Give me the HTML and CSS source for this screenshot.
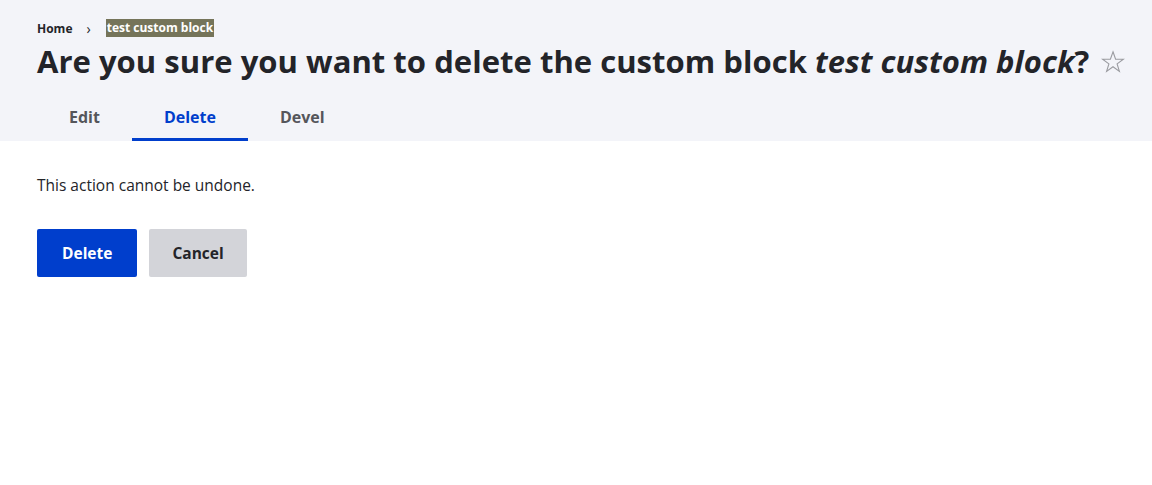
FILE: index.html
```html
<!DOCTYPE html>
<html lang="en">
<head>
<meta charset="utf-8">
<title>Delete custom block</title>
<link rel="stylesheet" href="styles.css">
</head>
<body>
<header class="page-header">
  <nav class="breadcrumb">
    <a class="crumb" href="#">Home</a>
    <span class="sep">›</span>
    <span class="crumb current">test custom block</span>
  </nav>
  <div class="title-row">
    <h1 class="title">Are you sure you want to delete the custom block <em>test custom block</em>?</h1>
    <span class="star" aria-label="Add to shortcuts">
      <svg width="24" height="24" viewBox="0 0 24 24"><path d="M12 1.8 L14.6 9.2 L22.4 9.2 L16.1 13.9 L18.4 21.4 L12 16.8 L5.6 21.4 L7.9 13.9 L1.6 9.2 L9.4 9.2 Z" fill="none" stroke="#9a9ba0" stroke-width="1.1" stroke-linejoin="miter"/></svg>
    </span>
  </div>
  <ul class="tabs">
    <li><a class="tab" href="#">Edit</a></li>
    <li><a class="tab active" href="#">Delete</a></li>
    <li><a class="tab" href="#">Devel</a></li>
  </ul>
</header>
<main class="content">
  <p class="message">This action cannot be undone.</p>
  <div class="actions">
    <button class="btn btn-primary">Delete</button>
    <button class="btn btn-secondary">Cancel</button>
  </div>
</main>
</body>
</html>
```
FILE: styles.css
```css
* { box-sizing: border-box; }
html, body { margin: 0; padding: 0; }
body {
  font-family: "Open Sans", "DejaVu Sans", sans-serif;
  color: #232429;
  background: #fff;
  width: 1152px;
  height: 485px;
  overflow: hidden;
}
.page-header {
  background: #f3f4f9;
  padding: 18px 0 0 37px;
  height: 141px;
}
.breadcrumb {
  display: flex;
  align-items: center;
  height: 20px;
  font-size: 12px;
  font-weight: 700;
}
.crumb { color: #232429; text-decoration: none; }
.sep { margin: 0 15px 0 14px; font-size: 14px; font-weight: 400; color: #232429; }
.current {
  background: #75745a;
  color: #fff;
  padding: 0 1px;
  line-height: 18px;
}
.title-row {
  display: flex;
  align-items: center;
  margin-top: 3px;
  height: 40px;
}
.title {
  margin: 0;
  font-size: 31px;
  line-height: 40px;
  font-weight: 700;
  letter-spacing: 0.03px;
  white-space: nowrap;
  color: #232429;
}
.title em { font-style: italic; }
.star { margin-left: 12px; display: flex; margin-top: 2px; flex: none; }
.tabs {
  list-style: none;
  margin: 14px 0 0;
  padding: 0;
  display: flex;
}
.tab {
  display: block;
  height: 46px;
  padding: 0 32px;
  font-size: 16px;
  font-weight: 700;
  color: #55565b;
  text-decoration: none;
  border-bottom: 3px solid transparent;
  line-height: 45px;
}
.tab.active { color: #003ecc; border-bottom-color: #003ecc; }
.content { padding: 0 37px; }
.message {
  margin: 34px 0 0;
  font-size: 15.5px;
  line-height: 21px;
}
.actions {
  display: flex;
  gap: 12px;
  margin-top: 33px;
}
.btn {
  height: 48px;
  border: 0;
  border-radius: 2px;
  padding: 0 24px;
  font-family: inherit;
  font-size: 15.5px;
  font-weight: 700;
}
.btn-primary { background: #003ecc; color: #fff; padding: 0 25px; }
.btn-secondary { background: #d3d4d9; color: #232429; padding: 0 23px; }
```
